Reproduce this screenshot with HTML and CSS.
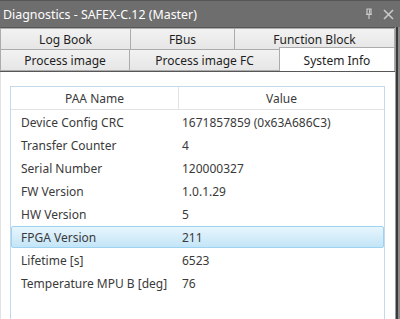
FILE: index.html
```html
<!DOCTYPE html>
<html>
<head>
<meta charset="utf-8">
<link rel="stylesheet" href="styles.css">
</head>
<body>
<div class="window">
  <div class="titlebar">
    <span class="title">Diagnostics - SAFEX-C.12 (Master)</span>
    <div class="title-icons">
      <svg class="pin" width="10" height="12" viewBox="0 0 10 12">
        <path d="M3 1h4v5h-4z M2 6.5h6 M5 7v4" fill="none" stroke="#c9c9c9" stroke-width="1.2"/>
        <path d="M5.5 1.5v4" stroke="#c9c9c9" stroke-width="1"/>
      </svg>
      <svg class="close" width="11" height="11" viewBox="0 0 11 11">
        <path d="M1 1L10 10M10 1L1 10" stroke="#c9c9c9" stroke-width="1.6"/>
      </svg>
    </div>
  </div>
  <div class="body">
    <div class="main">
      <div class="tabrow">
        <div class="tab w130">Log Book</div>
        <div class="tab w104">FBus</div>
        <div class="tab grow">Function Block</div>
      </div>
      <div class="tabrow">
        <div class="tab w129">Process image</div>
        <div class="tab w150">Process image FC</div>
        <div class="tab grow selected">System Info</div>
      </div>
      <div class="content">
        <div class="list">
          <div class="header">
            <div class="col-name">PAA Name</div>
            <div class="col-value">Value</div>
          </div>
          <div class="row"><span class="name">Device Config CRC</span><span class="value">1671857859 (0x63A686C3)</span></div>
          <div class="row"><span class="name">Transfer Counter</span><span class="value">4</span></div>
          <div class="row"><span class="name">Serial Number</span><span class="value">120000327</span></div>
          <div class="row"><span class="name">FW Version</span><span class="value">1.0.1.29</span></div>
          <div class="row"><span class="name">HW Version</span><span class="value">5</span></div>
          <div class="row sel"><span class="name">FPGA Version</span><span class="value">211</span></div>
          <div class="row"><span class="name">Lifetime [s]</span><span class="value">6523</span></div>
          <div class="row"><span class="name">Temperature MPU B [deg]</span><span class="value">76</span></div>
        </div>
      </div>
    </div>
    <div class="edge"></div>
  </div>
</div>
</body>
</html>
```
FILE: styles.css
```css
html, body {
  margin: 0;
  padding: 0;
}
body {
  width: 400px;
  height: 319px;
  overflow: hidden;
  background: #ffffff;
  font-family: "Noto Sans", "Open Sans", sans-serif;
  font-size: 12px;
  color: #333333;
}
.window {
  display: flex;
  flex-direction: column;
  height: 319px;
}
.titlebar {
  height: 27px;
  background: #6e6e6e;
  border-top: 1px solid #575757;
  display: flex;
  align-items: center;
  justify-content: space-between;
  padding: 0 6px 0 3px;
  box-sizing: border-box;
  flex: none;
}
.title {
  color: #ffffff;
  font-size: 12.4px;
  padding-top: 1px;
}
.title-icons {
  display: flex;
  align-items: center;
  gap: 9px;
}
.body {
  flex: 1;
  display: flex;
  min-height: 0;
  background: #575757;
}
.main {
  width: 395px;
  display: flex;
  flex-direction: column;
  padding-top: 1px;
}
.edge {
  width: 5px;
  border-left: 1px solid #9a9a9a;
  border-right: 2px solid #8a8a8a;
  background: #3a3a3a;
  box-sizing: border-box;
}
.tabrow {
  display: flex;
  height: 22px;
  flex: none;
}
.tab {
  box-sizing: border-box;
  height: 22px;
  border: 1px solid #acacac;
  border-right: none;
  background: linear-gradient(#f2f2f2, #e6e6e6);
  display: flex;
  align-items: center;
  justify-content: center;
  color: #1e1e1e;
  font-size: 12px;
  padding-top: 1px;
}
.tab:last-child {
  border-right: 1px solid #acacac;
}
.tabrow + .tabrow .tab {
  border-top: none;
  height: 21px;
}
.w130 { width: 130px; }
.w104 { width: 104px; }
.w129 { width: 129px; }
.w150 { width: 150px; }
.grow { flex: 1; }
.tab.selected {
  background: #ffffff;
  margin-top: -3px;
  height: 24px !important;
  border-top: 1px solid #acacac !important;
  border-bottom: none;
  position: relative;
}
.content {
  flex: 1;
  background: #ffffff;
  padding: 14px 10px 0 9px;
  border-left: 1px solid #e2e2e2;
  margin-top: 0;
}
.list {
  border: 1px solid #c4d9ea;
  border-bottom: none;
  height: 100%;
  box-sizing: border-box;
  color: #3a3a3a;
}
.header {
  display: flex;
  height: 22px;
  border-bottom: 1px solid #e3e3e3;
  margin-bottom: 1px;
}
.header > div {
  display: flex;
  align-items: center;
  justify-content: center;
}
.col-name {
  width: 167px;
  border-right: 1px solid #e3e3e3;
}
.col-value {
  flex: 1;
}
.row {
  display: flex;
  align-items: center;
  height: 22px;
  margin-bottom: 1px;
  box-sizing: border-box;
  border: 1px solid transparent;
  border-radius: 2px;
}
.row.sel {
  border-color: #9dd2f1;
  background: linear-gradient(#e7f5fd, #c3e5f7);
}
.name {
  width: 159px;
  padding-left: 9px;
  flex: none;
}
.value {
  padding-left: 2px;
}
```
